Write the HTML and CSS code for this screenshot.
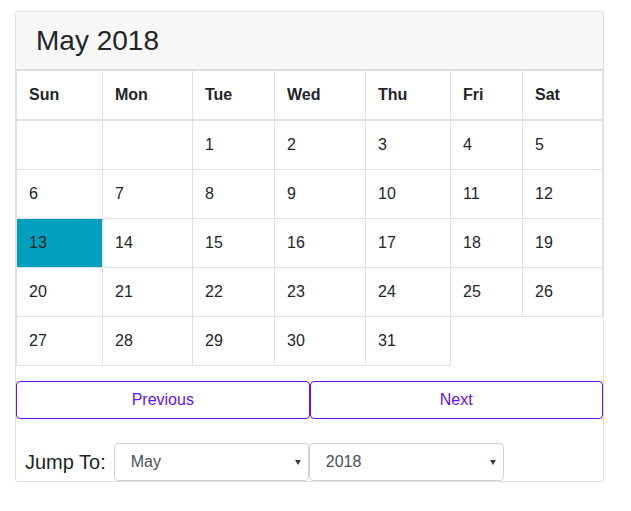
FILE: index.html
```html
<!DOCTYPE html>
<html lang="en">
<head>
  <meta charset="UTF-8">
  <meta name="viewport" content="width=device-width, initial-scale=1.0">
  <title>Calendar</title>
  <link rel="stylesheet" href="styles.css">
</head>
<body>
  <div class="card">
    <div class="card-header">
      <h3 class="month-title">May 2018</h3>
    </div>

    <table class="calendar">
      <colgroup>
        <col class="col-sun">
        <col class="col-mon">
        <col class="col-tue">
        <col class="col-wed">
        <col class="col-thu">
        <col class="col-fri">
        <col class="col-sat">
      </colgroup>
      <thead>
        <tr>
          <th>Sun</th>
          <th>Mon</th>
          <th>Tue</th>
          <th>Wed</th>
          <th>Thu</th>
          <th>Fri</th>
          <th>Sat</th>
        </tr>
      </thead>
      <tbody>
        <tr>
          <td></td>
          <td></td>
          <td>1</td>
          <td>2</td>
          <td>3</td>
          <td>4</td>
          <td>5</td>
        </tr>
        <tr>
          <td>6</td>
          <td>7</td>
          <td>8</td>
          <td>9</td>
          <td>10</td>
          <td>11</td>
          <td>12</td>
        </tr>
        <tr>
          <td class="today">13</td>
          <td>14</td>
          <td>15</td>
          <td>16</td>
          <td>17</td>
          <td>18</td>
          <td>19</td>
        </tr>
        <tr>
          <td>20</td>
          <td>21</td>
          <td>22</td>
          <td>23</td>
          <td>24</td>
          <td>25</td>
          <td>26</td>
        </tr>
        <tr>
          <td>27</td>
          <td>28</td>
          <td>29</td>
          <td>30</td>
          <td>31</td>
        </tr>
      </tbody>
    </table>

    <div class="nav-buttons">
      <button class="btn-outline" id="previous">Previous</button>
      <button class="btn-outline" id="next">Next</button>
    </div>

    <form class="jump-form">
      <label class="jump-label" for="month">Jump To:</label>
      <span class="select-wrap">
        <select class="custom-select" id="month" name="month">
          <option value="0">Jan</option>
          <option value="1">Feb</option>
          <option value="2">Mar</option>
          <option value="3">Apr</option>
          <option value="4" selected>May</option>
          <option value="5">Jun</option>
          <option value="6">Jul</option>
          <option value="7">Aug</option>
          <option value="8">Sep</option>
          <option value="9">Oct</option>
          <option value="10">Nov</option>
          <option value="11">Dec</option>
        </select>
      </span>
      <span class="select-wrap">
        <select class="custom-select" id="year" name="year">
          <option value="2016">2016</option>
          <option value="2017">2017</option>
          <option value="2018" selected>2018</option>
          <option value="2019">2019</option>
          <option value="2020">2020</option>
        </select>
      </span>
    </form>
  </div>
</body>
</html>
```

FILE: styles.css
```css
body {
  margin: 0;
  padding: 11px 15px;
  font-family: 'Liberation Sans', Arial, sans-serif;
  font-size: 16px;
  line-height: 1.5;
  color: #212529;
  background-color: #fff;
}

.card {
  width: 587px;
  border: 1px solid rgba(0, 0, 0, 0.125);
  border-radius: 4px;
  background-color: #fff;
}

.card-header {
  padding: 12px 20px 11px;
  background-color: #f7f7f7;
  border-bottom: 1px solid rgba(0, 0, 0, 0.125);
  border-radius: 3px 3px 0 0;
}

.month-title {
  margin: 0;
  font-size: 28px;
  font-weight: 500;
  line-height: 1.2;
}

.calendar {
  width: 586px;
  margin-bottom: 15px;
  border-collapse: collapse;
  table-layout: fixed;
}

.col-sun { width: 86px; }
.col-mon { width: 90px; }
.col-tue { width: 82px; }
.col-wed { width: 91px; }
.col-thu { width: 85px; }
.col-fri { width: 72px; }
.col-sat { width: 80px; }

.calendar th,
.calendar td {
  padding: 12px;
  vertical-align: top;
  text-align: left;
  border: 1px solid #dee2e6;
}

.calendar th {
  font-weight: bold;
}

.calendar thead th {
  vertical-align: bottom;
  border-bottom-width: 2px;
}

.calendar .today {
  background-color: #009fbd;
}

.nav-buttons {
  display: flex;
}

.btn-outline {
  flex: 1;
  padding: 6px 12px;
  font-family: inherit;
  font-size: 16px;
  line-height: 1.5;
  color: #6610f2;
  background-color: transparent;
  border: 1px solid #6610f2;
  border-radius: 4px;
  cursor: pointer;
}

.btn-outline:hover {
  color: #fff;
  background-color: #6610f2;
}

.jump-form {
  display: flex;
  align-items: center;
  margin: 24px 0 0;
}

.jump-label {
  padding-left: 9px;
  margin-right: 8px;
  font-size: 20px;
}

.select-wrap {
  position: relative;
  display: inline-block;
}

.select-wrap::after {
  content: "";
  position: absolute;
  right: 8px;
  top: 17px;
  border-left: 3.5px solid transparent;
  border-right: 3.5px solid transparent;
  border-top: 5px solid #343a40;
  pointer-events: none;
}

.custom-select {
  width: 195px;
  height: 38px;
  padding: 6px 28px 6px 16px;
  font-family: inherit;
  font-size: 16px;
  line-height: 1.5;
  color: #495057;
  background-color: #fff;
  border: 1px solid #ced4da;
  border-radius: 4px;
  appearance: none;
  -webkit-appearance: none;
}
```
